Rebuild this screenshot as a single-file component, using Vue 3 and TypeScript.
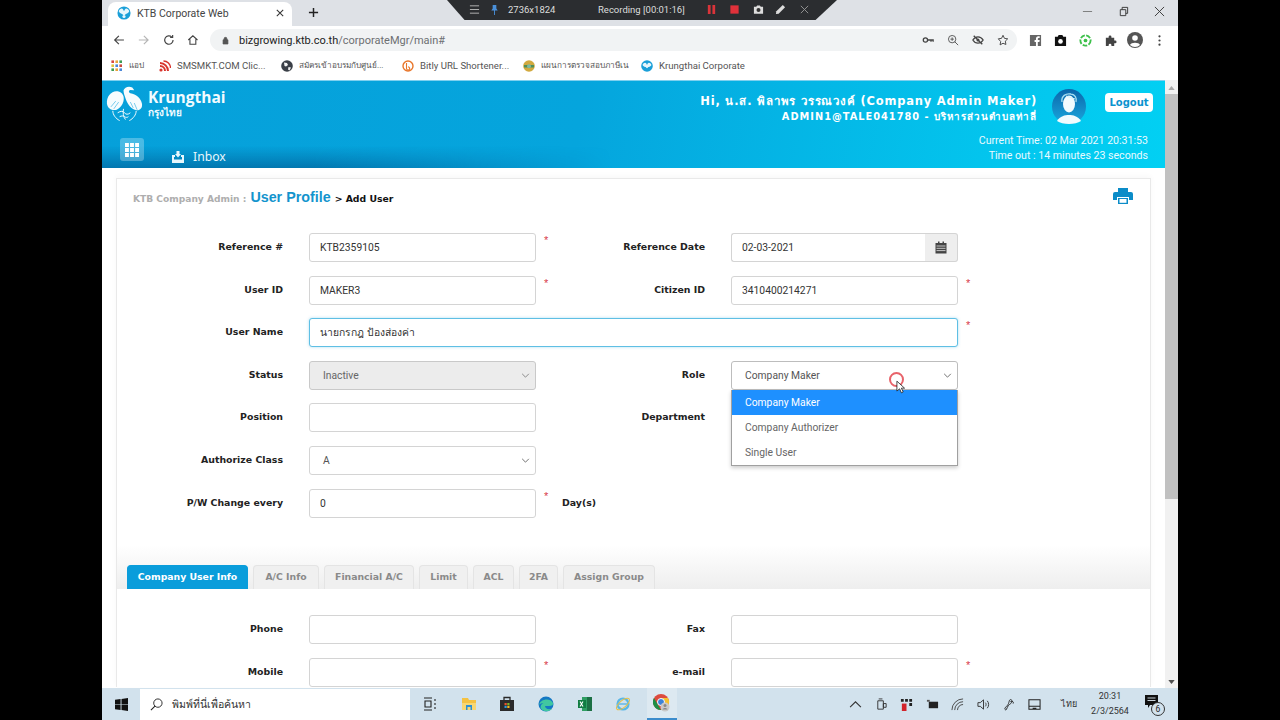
<template>
  <div class="screen">
    <div class="pillar"></div>
    <div class="window">
      <!-- browser tab strip -->
      <div class="tabstrip">
        <div class="browser-tab">
          <svg class="favicon" viewBox="0 0 16 16"><circle cx="8" cy="8" r="7.500" fill="#1a9fd8" /><path d="M2 6c1-3 4-4 5-2l1 2 1-2c1-2 4-1 5 2-1 2-3 3-4 3-1 2-3 2-4 0-1 0-3-1-4-3z" fill="#e6f6fc" /><circle cx="8" cy="12" r="1.800" fill="#e6f6fc" /></svg>
          <span class="browser-tab-title">KTB Corporate Web</span>
          <svg class="tab-close" viewBox="0 0 10 10"><path d="M1 1l8 8M9 1l-8 8" stroke="#333" stroke-width="1.300" /></svg>
        </div>
        <svg class="new-tab" viewBox="0 0 12 12"><path d="M6 1v10M1 6h10" stroke="#222" stroke-width="1.600" /></svg>
        <div class="winctl">
          <svg viewBox="0 0 12 12"><path d="M1 6h10" stroke="#777" stroke-width="1" /></svg>
          <svg viewBox="0 0 12 12"><path d="M2.500 4h6v6.500h-6zM4.500 4V1.500h6v6.500H8.500" fill="none" stroke="#333" stroke-width="1" /></svg>
          <svg viewBox="0 0 12 12"><path d="M1 1l10 10M11 1L1 11" stroke="#333" stroke-width="1" /></svg>
        </div>
        <!-- screen recorder bar lying over the window -->
        <div class="recorder">
          <svg class="rec-ic" style="left: 22px" viewBox="0 0 12 12"><path d="M1 2h10M1 6h10M1 10h10" stroke="#bbb" stroke-width="1" /></svg>
          <svg class="rec-ic" style="left: 42px" viewBox="0 0 12 12"><path d="M4 1h4v4l1.500 2h-7L4 5zM5.500 7h1v5h-1z" fill="#4a90d9" /></svg>
          <span class="rec-size">2736x1824</span>
          <span class="rec-time">Recording [00:01:16]</span>
          <svg class="rec-ic" style="left: 259px" viewBox="0 0 12 12"><path d="M2 1h3v10H2zM7 1h3v10H7z" fill="#d9343a" /></svg>
          <svg class="rec-ic" style="left: 282px" viewBox="0 0 12 12"><path d="M1.500 1.500h9v9h-9z" fill="#e0313a" /></svg>
          <svg class="rec-ic" style="left: 306px" viewBox="0 0 12 12"><path d="M1 3h2.500l1-1.500h3L8.500 3H11v7.500H1z" fill="#ddd" /><circle cx="6" cy="6.500" r="2.200" fill="#333" /></svg>
          <svg class="rec-ic" style="left: 328px" viewBox="0 0 12 12"><path d="M8.500 1L11 3.500 4 10.500 1 11l.5-3z" fill="#ddd" /></svg>
          <svg class="rec-ic" style="left: 352px" viewBox="0 0 12 12"><path d="M2 2l8 8M10 2l-8 8" stroke="#999" stroke-width="1" /></svg>
        </div>
      </div>

      <!-- address bar -->
      <div class="toolbar">
        <div class="nav-icons">
          <svg viewBox="0 0 14 14"><path d="M13 7H2M7 2L2 7l5 5" fill="none" stroke="#444" stroke-width="1.400" /></svg>
          <svg viewBox="0 0 14 14"><path d="M1 7h11M7 2l5 5-5 5" fill="none" stroke="#b5b5b5" stroke-width="1.400" /></svg>
          <svg viewBox="0 0 14 14"><path d="M12 7a5 5 0 1 1-1.500-3.500M11.500 1v3h-3" fill="none" stroke="#444" stroke-width="1.400" /></svg>
          <svg viewBox="0 0 14 14"><path d="M1.500 7L7 2l5.500 5M3.500 6v6h7V6" fill="none" stroke="#444" stroke-width="1.300" /></svg>
        </div>
        <div class="omnibox">
          <svg class="lock" viewBox="0 0 10 12"><path d="M1.500 5h7v6h-7zM3 5V3.500a2 2 0 0 1 4 0V5" fill="#555" stroke="#555" stroke-width="1" /></svg>
          <span class="url"><b>bizgrowing.ktb.co.th</b>/corporateMgr/main#</span>
          <div class="omni-icons">
            <svg viewBox="0 0 14 14"><circle cx="4" cy="7" r="2.500" fill="none" stroke="#444" stroke-width="1.500" /><path d="M6.500 7H13v2M10.500 7v2" fill="none" stroke="#444" stroke-width="1.500" /></svg>
            <svg viewBox="0 0 14 14"><circle cx="6" cy="6" r="4.300" fill="none" stroke="#555" stroke-width="1.100" /><path d="M9 9l4 4M4 6h4M6 4v4" stroke="#555" stroke-width="1.100" /></svg>
            <svg viewBox="0 0 14 14"><path d="M1 7c3-5 9-5 12 0-3 5-9 5-12 0z" fill="none" stroke="#444" stroke-width="1.500" /><circle cx="7" cy="7" r="1.800" fill="#444" /><path d="M2 2l10 10" stroke="#444" stroke-width="1.500" /></svg>
            <svg viewBox="0 0 14 14"><path d="M7 1.500l1.700 3.600 3.800.5-2.800 2.700.7 3.900L7 10.800l-3.400 1.900.7-3.900L1.500 5.600l3.800-.5z" fill="none" stroke="#444" stroke-width="1.100" /></svg>
          </div>
        </div>
        <div class="ext-icons">
          <svg viewBox="0 0 14 14"><path d="M1 1h12v12H9.500V8.500h1.700l.3-2h-2V5.200c0-.6.300-1 1-1h1V2.400h-1.500C8.500 2.400 7.500 3.500 7.500 5v1.500H6v2h1.500V13H1z" fill="#666" /></svg>
          <svg viewBox="0 0 14 14"><path d="M1 3h3l1-2h4l1 2h3v10H1z" fill="#111" /><circle cx="7" cy="8" r="2.500" fill="#fff" /></svg>
          <svg viewBox="0 0 14 14"><circle cx="7" cy="7" r="5.500" fill="none" stroke="#3cc04a" stroke-width="2" stroke-dasharray="5 1.500" /><circle cx="7" cy="7" r="2" fill="#3cc04a" /></svg>
          <svg viewBox="0 0 14 14"><path d="M2 4h3V3a1.500 1.500 0 0 1 3 0v1h3v3h1a1.500 1.500 0 0 1 0 3h-1v3H8v-1a1.500 1.500 0 0 0-3 0v1H2z" fill="#444" /></svg>
          <svg class="ext-avatar" viewBox="0 0 16 16"><circle cx="8" cy="8" r="8" fill="#555" /><circle cx="8" cy="6" r="2.800" fill="#fff" /><path d="M3 13c1-3 9-3 10 0a7 7 0 0 1-10 0z" fill="#fff" /></svg>
          <svg class="ext-dots" viewBox="0 0 14 14"><circle cx="7" cy="2.500" r="1.200" fill="#444" /><circle cx="7" cy="7" r="1.200" fill="#444" /><circle cx="7" cy="11.500" r="1.200" fill="#444" /></svg>
        </div>
      </div>

      <!-- bookmarks -->
      <div class="bookmarks">
        <div v-for="b in bookmarks" :key="b.label" class="bookmark" :style="{ width: b.width + 'px' }">
          <svg class="bm-icon" viewBox="0 0 12 12">
            <template v-if="b.icon === 'apps'">
              <rect v-for="c in appDots" :key="c.x + '-' + c.y" :x="c.x" :y="c.y" width="2.600" height="2.600" :fill="c.fill" />
            </template>
            <template v-else-if="b.icon === 'rss'">
              <path d="M1 3a8 8 0 0 1 8 8M1 6a5 5 0 0 1 5 5" fill="none" stroke="#d8342c" stroke-width="2" />
              <path d="M4.500 1a7 7 0 0 1 7 7" fill="none" stroke="#d8342c" stroke-width="1.400" />
              <circle cx="2" cy="10" r="1.600" fill="#d8342c" />
            </template>
            <template v-else-if="b.icon === 'globe'">
              <circle cx="6" cy="6" r="5.800" fill="#3a3f47" />
              <path d="M3 2.500l3 .5 1 2-2 1.500-1.500-.5zM7.500 7l2.500.5-1.500 3-1.500-1z" fill="#f4f4f4" />
            </template>
            <template v-else-if="b.icon === 'bitly'">
              <circle cx="6" cy="6" r="5" fill="#fff" stroke="#e8762b" stroke-width="1.400" />
              <path d="M4.500 3v5.500a1.600 1.600 0 1 0 1.600-1.600" fill="none" stroke="#e8762b" stroke-width="1.100" />
            </template>
            <template v-else-if="b.icon === 'seal'">
              <circle cx="6" cy="6" r="5.800" fill="#d2a93e" />
              <path d="M1 5h10v2.500H1z" fill="#4f8f58" />
              <circle cx="6" cy="6.300" r="2" fill="#7fb9a0" />
            </template>
            <template v-else>
              <circle cx="6" cy="6" r="5.800" fill="#1a9fd8" />
              <path d="M1.500 5c1-2.500 3-3 3.800-1.500L6 5l.7-1.500C7.500 2 9.500 2.500 10.500 5c-1 1.500-2.300 2-3.200 2-.7 1.500-1.900 1.500-2.600 0-.9 0-2.200-.5-3.200-2z" fill="#e6f6fc" />
            </template>
          </svg>
          <span :class="{ 'bm-thai': b.thai }">{{ b.label }}</span>
        </div>
      </div>

      <div class="page">
        <div class="viewport">
          <header class="site-header">
            <div class="header-glow"></div>
            <div class="header-left">
              <div class="brand">
                <svg class="garuda" viewBox="0 0 38 38">
                  <path d="M1 19C0 11 6 5 12 6c5 1 7 5 6 10-1 4-3 7-7 9-5 1-9-1-10-6z" fill="#f6fcfe" />
                  <path d="M18 5c1-3 5-5 9-3l2 3-4-.5c-2 .5-2 2.500 0 3.500 6 1 11 5 12 11 .5 5-3 7.500-7.500 6-4.500-2-8-7-9.500-12-1-3-2-5-2-8z" fill="#f6fcfe" />
                  <path d="M5 22l5-6M8 24l5-7M28 23l-3-6M32 25l-3-7" stroke="#3eb6e4" stroke-width=".7" />
                  <path d="M7 26c0 4 3 8 7 10M31 26c0 4-3 8-7 10M12 28c3-2 6-2 7 0 1 2 4 2 6 0M14 32c2-1 4-1 5 0 1 1 3 1 4 0M18 24c-1 3 0 9 2 11" fill="none" stroke="#f6fcfe" stroke-width="1" />
                </svg>
                <div class="brand-text">
                  <div class="brand-name">Krungthai</div>
                  <div class="brand-thai">กรุงไทย</div>
                </div>
              </div>
              <div class="main-nav">
                <div class="grid-btn">
                  <svg viewBox="0 0 13 13"><path d="M0 0h3.600v3.600H0zM4.700 0h3.600v3.600H4.700zM9.400 0H13v3.600H9.400zM0 4.700h3.600v3.600H0zM4.700 4.700h3.600v3.600H4.700zM9.400 4.700H13v3.600H9.400zM0 9.400h3.600V13H0zM4.700 9.400h3.600V13H4.700zM9.400 9.400H13V13H9.400z" fill="#fff" /></svg>
                </div>
                <div class="inbox">
                  <svg viewBox="0 0 14 14"><path d="M1 5h3v2H3v2.500h8V7h-1V5h3v8H1z" fill="#e8f7fc" /><path d="M5.500 1h3v3H10L7 7.500 4 4h1.500z" fill="#e8f7fc" /></svg>
                  <span>Inbox</span>
                </div>
              </div>
            </div>
            <div class="header-right">
              <div class="user-row">
                <div class="user-lines">
                  <div class="user-name">Hi, น.ส. พิลาพร วรรณวงค์ (Company Admin Maker)</div>
                  <div class="user-org">ADMIN1@TALE041780 - บริหารส่วนตำบลท่าลี่</div>
                </div>
                <svg class="avatar" viewBox="0 0 34 35">
                  <defs>
                    <linearGradient id="avatarFill" x1="0" y1="0" x2="0" y2="1">
                      <stop offset="0" stop-color="#0b66aa" />
                      <stop offset="1" stop-color="#1aa8de" />
                    </linearGradient>
                  </defs>
                  <ellipse cx="17" cy="17.500" rx="17" ry="17.500" fill="url(#avatarFill)" />
                  <ellipse cx="17" cy="15" rx="6" ry="8.500" fill="#f2fbfe" />
                  <path d="M5 32c3-5 8-6 12-6s9 1 12 6c-3 2-7 3-12 3S8 34 5 32z" fill="#f2fbfe" />
                  <path d="M10 13c-1-6 4-9 9-8 4 .5 6 4 5 8" fill="none" stroke="#a9def2" stroke-width="1.300" />
                  <path d="M14 7l9 3" stroke="#d6f1fa" stroke-width="1" />
                </svg>
                <button class="logout">Logout</button>
              </div>
              <div class="times">
                <div>Current Time: 02 Mar 2021 20:31:53</div>
                <div>Time out : 14 minutes 23 seconds</div>
              </div>
            </div>
          </header>

          <main class="card">
            <div class="title-row">
              <div>
                <span class="crumb">KTB Company Admin :</span>
                <span class="title">User Profile</span>
                <span class="sub">&gt; Add User</span>
              </div>
              <svg class="printer" viewBox="0 0 20 16"><path d="M5 0h10v4H5z" fill="#0b8cc8" /><path d="M2 4h16a2 2 0 0 1 2 2v6h-4V9H4v3H0V6a2 2 0 0 1 2-2z" fill="#0b8cc8" /><path d="M5 10h10v6H5z" fill="#0b8cc8" /><path d="M6.500 11h7v3.800h-7z" fill="#fff" /></svg>
            </div>

            <div class="form-grid">
              <label class="lbl">Reference #</label>
              <input class="ctl" value="KTB2359105" readonly />
              <span class="req">*</span>
              <label class="lbl">Reference Date</label>
              <div class="date-group">
                <input class="ctl date-input" value="02-03-2021" readonly />
                <span class="date-btn">
                  <svg viewBox="0 0 12 13"><path d="M.5 2H3V.5h1.500V2h3V.5H9V2h2.500v10.500H.5z" fill="#444" /><path d="M1.500 5h9M1.500 7.300h9M1.500 9.600h9" stroke="#e8e8e8" stroke-width=".8" /></svg>
                </span>
              </div>
              <span></span>

              <label class="lbl">User ID</label>
              <input class="ctl" value="MAKER3" readonly />
              <span class="req">*</span>
              <label class="lbl">Citizen ID</label>
              <input class="ctl" value="3410400214271" readonly />
              <span class="req">*</span>

              <label class="lbl">User Name</label>
              <input class="ctl ctl-focus" value="นายกรกฎ ป้องส่องค่า" readonly />
              <span class="req">*</span>

              <label class="lbl">Status</label>
              <div class="ctl sel sel-off">Inactive<svg class="chev" viewBox="0 0 10 6"><path d="M1 1l4 4 4-4" fill="none" stroke="#777" stroke-width="1" /></svg></div>
              <span></span>
              <label class="lbl">Role</label>
              <div class="role-wrap">
                <div class="ctl sel sel-open">Company Maker<svg class="chev" viewBox="0 0 10 6"><path d="M1 1l4 4 4-4" fill="none" stroke="#555" stroke-width="1" /></svg></div>
                <ul class="dropdown">
                  <li v-for="(r, i) in roles" :key="r" :class="{ active: i === 0 }">{{ r }}</li>
                </ul>
                <span class="click-ring"></span>
                <svg class="pointer" viewBox="0 0 10 15"><path d="M1 1v11l3-2.500 2 4.500 2-1-2-4.200h3.500z" fill="#fff" stroke="#222" stroke-width=".9" /></svg>
              </div>
              <span></span>

              <label class="lbl">Position</label>
              <input class="ctl" readonly />
              <span></span>
              <label class="lbl">Department</label>
              <span></span>
              <span></span>

              <label class="lbl">Authorize Class</label>
              <div class="ctl sel">A<svg class="chev" viewBox="0 0 10 6"><path d="M1 1l4 4 4-4" fill="none" stroke="#555" stroke-width="1" /></svg></div>
              <span></span>
              <span></span>
              <span></span>
              <span></span>

              <label class="lbl">P/W Change every</label>
              <input class="ctl" value="0" readonly />
              <span class="req">*</span>
              <label class="lbl lbl-left">Day(s)</label>
            </div>

            <div class="tab-band">
              <div
                v-for="(t, i) in tabs"
                :key="t.label"
                class="tab"
                :class="{ current: i === 0 }"
                :style="{ width: t.width + 'px' }"
              >
                {{ t.label }}
              </div>
            </div>

            <div class="form-grid lower">
              <label class="lbl">Phone</label>
              <input class="ctl" readonly />
              <span></span>
              <label class="lbl">Fax</label>
              <input class="ctl" readonly />
              <span></span>

              <label class="lbl">Mobile</label>
              <input class="ctl" readonly />
              <span class="req">*</span>
              <label class="lbl">e-mail</label>
              <input class="ctl" readonly />
              <span class="req">*</span>
            </div>
          </main>
        </div>

        <div class="scrollbar">
          <svg class="sb-arrow" viewBox="0 0 8 5"><path d="M4 0l4 5H0z" fill="#a8a8a8" /></svg>
          <div class="sb-thumb"></div>
          <svg class="sb-arrow sb-down" viewBox="0 0 8 5"><path d="M0 0h8L4 5z" fill="#505050" /></svg>
        </div>
      </div>

      <!-- windows taskbar -->
      <footer class="taskbar">
        <svg class="start" viewBox="0 0 14 14"><path d="M0 2l6-.9V6.600H0zM7 1l7-1v6.600H7zM0 7.400h6v5.500L0 12zM7 7.400h7V14l-7-1z" fill="#111" /></svg>
        <div class="search">
          <svg viewBox="0 0 14 14"><circle cx="8.500" cy="5.500" r="4.500" fill="none" stroke="#222" stroke-width="1" /><path d="M5.300 8.700L1 13" stroke="#222" stroke-width="1.100" /></svg>
          <span>พิมพ์ที่นี่เพื่อค้นหา</span>
        </div>
        <div class="apps">
          <svg viewBox="0 0 16 16"><path d="M2 2h8M2 14h8M3 5h6v6H3zM13 3v2M13 7v2M13 11v2" fill="none" stroke="#222" stroke-width="1.100" /></svg>
          <svg viewBox="0 0 16 16"><path d="M1 2h6l1 2h7v10H1z" fill="#f5c242" /><path d="M1 7h14v7H1z" fill="#f7d774" /><path d="M5 9h6v5H9.500v-3h-3v3H5z" fill="#2a8fd6" /></svg>
          <svg viewBox="0 0 16 16"><path d="M1 4h14v11H1z" fill="#2b2b2b" /><path d="M5 4V1.500h6V4" fill="none" stroke="#2b2b2b" stroke-width="1.300" /><path d="M5.500 7h2.200v2.200H5.500z" fill="#e8512d" /><path d="M8.300 7h2.200v2.200H8.300z" fill="#7db928" /><path d="M5.500 9.800h2.200V12H5.500z" fill="#2a9bdc" /><path d="M8.300 9.800h2.200V12H8.300z" fill="#f6b81c" /></svg>
          <svg viewBox="0 0 16 16"><circle cx="8" cy="8" r="7.500" fill="#1478c4" /><path d="M1 9c1-6 11-8 14-2 .5 2-1 3-4 3H7c0 3 4 4 7 2.500C12 16 5 16 3 12.500 2 11 3 8 5.500 7 3 7 1.500 8 1 9z" fill="#41c8a0" /></svg>
          <svg viewBox="0 0 16 16"><path d="M5 1h10v14H5z" fill="#2f9e63" /><path d="M10 1h5v14h-5z" fill="#1c7044" /><path d="M1 4h8v8H1z" fill="#107c41" /><path d="M3 5.500l3 5M6 5.500l-3 5" stroke="#fff" stroke-width="1.100" /></svg>
          <svg viewBox="0 0 16 16"><circle cx="8" cy="8" r="5.500" fill="none" stroke="#58b7e8" stroke-width="2.200" /><path d="M3 8h10" stroke="#58b7e8" stroke-width="1.400" /><ellipse cx="8" cy="8" rx="8" ry="3.500" transform="rotate(-40 8 8)" fill="none" stroke="#e5c04a" stroke-width="1" /></svg>
          <div class="chrome-app">
            <svg viewBox="0 0 18 18"><circle cx="8" cy="8" r="8" fill="#dd4b3e" /><path d="M1 4l4 7 3 5a8 8 0 0 1-7-12z" fill="#1e8f45" /><path d="M8 16a8 8 0 0 0 7-12H8l4 4z" fill="#f6c12f" /><circle cx="8" cy="8" r="3.500" fill="#3b82d8" stroke="#fff" stroke-width="1" /><circle cx="12" cy="13" r="4.500" fill="#c9c9c9" /><circle cx="12" cy="11.500" r="1.500" fill="#888" /><path d="M9.500 15.500c.5-2 4.500-2 5 0" fill="#888" /></svg>
          </div>
        </div>
        <div class="tray">
          <svg viewBox="0 0 12 12"><path d="M1 8.500L6 3.500l5 5" fill="none" stroke="#333" stroke-width="1" /></svg>
          <svg viewBox="0 0 12 14"><path d="M2 3h6v9H2zM8 6h3v4H8zM3 1h4" fill="none" stroke="#333" stroke-width="1" /></svg>
          <svg viewBox="0 0 14 14"><path d="M2 6h5v8H2z" fill="#d2232a" /><path d="M1 1h3v3H1zM5.500 1h3v3h-3zM10 1h3v3h-3zM10 5.500h3v3h-3z" fill="#222" /></svg>
          <svg viewBox="0 0 14 12"><path d="M3 3h10v7H3z" fill="#222" /><path d="M1 1h3v2H1z" fill="#555" /></svg>
          <svg viewBox="0 0 14 14"><path d="M1 13a12 12 0 0 1 12-12M4 13a9 9 0 0 1 9-9M7 13a6 6 0 0 1 6-6" fill="none" stroke="#444" stroke-width="1" /></svg>
          <svg viewBox="0 0 14 14"><path d="M1 5h2.500L7 2v10L3.500 9H1zM9 5c1 1 1 3 0 4M11 3c2 2 2 6 0 8" fill="none" stroke="#333" stroke-width="1" /></svg>
          <svg viewBox="0 0 14 14"><path d="M4 13c-3-2 2-4 3-7s1-5 3-4 0 4-2 5-3 6-4 6zM9 4c2-1 4 0 3 2" fill="none" stroke="#222" stroke-width="1" /></svg>
          <svg viewBox="0 0 14 14"><path d="M1 2h12v10H1zM1 9h12M5 11h4" fill="none" stroke="#222" stroke-width="1.100" /></svg>
          <span class="lang">ไทย</span>
          <div class="clock"><div>20:31</div><div>2/3/2564</div></div>
          <div class="notify">
            <svg viewBox="0 0 14 14"><path d="M0 0h13v10H5l-2 3v-3H0z" fill="#111" /><path d="M2.500 3h8M2.500 5.500h8" stroke="#dbe7ef" stroke-width=".9" /></svg>
            <span class="notify-count">6</span>
          </div>
        </div>
      </footer>
    </div>
    <div class="pillar"></div>
  </div>
</template>

<script setup lang="ts">
interface Bookmark {
  label: string
  icon: string
  width: number
  thai?: boolean
}

const bookmarks: Bookmark[] = [
  { label: 'แอป', icon: 'apps', width: 48, thai: true },
  { label: 'SMSMKT.COM Clic...', icon: 'rss', width: 122 },
  { label: 'สมัครเข้าอบรมกับศูนย์...', icon: 'globe', width: 121, thai: true },
  { label: 'Bitly URL Shortener...', icon: 'bitly', width: 121 },
  { label: 'แผนการตรวจสอบภาษีเน', icon: 'seal', width: 118, thai: true },
  { label: 'Krungthai Corporate', icon: 'ktb', width: 120 },
]

// coloured squares of the Chrome apps shortcut
const dotColors = ['#d8483e', '#e8a33a', '#3d9c52', '#e2c23c', '#4a86d8', '#c94a3c', '#3d9c52', '#e8a33a', '#4a86d8']
const appDots = dotColors.map((fill, i) => ({
  fill,
  x: 0.4 + (i % 3) * 4,
  y: 0.4 + Math.floor(i / 3) * 4,
}))

const roles = ['Company Maker', 'Company Authorizer', 'Single User']

const tabs = [
  { label: 'Company User Info', width: 121 },
  { label: 'A/C Info', width: 66 },
  { label: 'Financial A/C', width: 90 },
  { label: 'Limit', width: 49 },
  { label: 'ACL', width: 41 },
  { label: '2FA', width: 39 },
  { label: 'Assign Group', width: 92 },
]
</script>

<style>
html,
body {
  margin: 0;
  background: #000;
  overflow: hidden;
}
</style>

<style scoped>
.screen {
  display: flex;
  width: 1280px;
  height: 720px;
  font-family: Roboto, "Noto Sans", sans-serif;
  background: #000;
}
.pillar {
  width: 102px;
  flex: none;
  background: #000;
}
.window {
  width: 1076px;
  flex: none;
  display: flex;
  flex-direction: column;
  overflow: hidden;
}

/* browser chrome */
.tabstrip {
  position: relative;
  height: 26px;
  flex: none;
  background: #dee1e6;
  display: flex;
  align-items: flex-end;
  padding-left: 6px;
}
.browser-tab {
  width: 184px;
  height: 24px;
  background: #fff;
  border-radius: 8px 8px 0 0;
  display: flex;
  align-items: center;
  padding: 0 8px 2px 9px;
  box-sizing: border-box;
}
.favicon {
  width: 14px;
  height: 14px;
  margin-right: 6px;
}
.browser-tab-title {
  flex: 1;
  font-size: 10.500px;
  color: #444;
}
.tab-close {
  width: 8px;
  height: 8px;
}
.new-tab {
  width: 11px;
  height: 11px;
  margin: 0 0 8px 16px;
}
.winctl {
  margin-left: auto;
  margin-right: 13px;
  align-self: flex-start;
  margin-top: 6px;
  display: flex;
  gap: 25px;
}
.winctl svg {
  width: 11px;
  height: 11px;
}
.recorder {
  position: absolute;
  left: 345px;
  top: 0;
  width: 390px;
  height: 20px;
  background: #2b2d30;
  clip-path: polygon(0 0, 100% 0, 94.500% 100%, 4.500% 100%);
  color: #ddd;
  font-size: 9.500px;
}
.rec-ic {
  position: absolute;
  top: 4px;
  width: 11px;
  height: 11px;
}
.rec-size {
  position: absolute;
  left: 61px;
  top: 4px;
}
.rec-time {
  position: absolute;
  left: 151px;
  top: 4px;
}
.toolbar {
  height: 26px;
  flex: none;
  background: #fff;
  display: flex;
  align-items: center;
}
.nav-icons {
  display: flex;
  gap: 13px;
  padding-left: 11px;
  width: 97px;
  box-sizing: border-box;
  flex: none;
  margin-top: 2px;
}
.nav-icons svg {
  width: 12px;
  height: 12px;
}
.omnibox {
  width: 807px;
  flex: none;
  margin-left: 11px;
  height: 22px;
  margin-top: 2px;
  border-radius: 11px;
  background: #f1f3f4;
  display: flex;
  align-items: center;
  padding: 0 8px 0 12px;
  box-sizing: border-box;
}
.lock {
  width: 7px;
  height: 9px;
}
.url {
  margin-left: 10px;
  font-size: 11px;
  color: #6d6f72;
}
.url b {
  font-weight: 400;
  color: #222;
}
.omni-icons {
  margin-left: auto;
  display: flex;
  gap: 13px;
}
.omni-icons svg {
  width: 12px;
  height: 12px;
}
.ext-icons {
  margin-left: 12px;
  margin-top: 2px;
  display: flex;
  align-items: center;
  gap: 12px;
}
.ext-icons svg {
  width: 13px;
  height: 13px;
}
.ext-icons .ext-avatar {
  width: 16px;
  height: 16px;
  margin: 0 -1px 0 -2px;
}
.ext-icons .ext-dots {
  margin-left: -1px;
}
.bookmarks {
  height: 28px;
  flex: none;
  background: #fff;
  display: flex;
  align-items: center;
  padding-left: 9px;
  padding-bottom: 1px;
  font-size: 9.600px;
  color: #555;
  box-sizing: border-box;
}
.bookmark {
  display: flex;
  align-items: center;
  gap: 6px;
  flex: none;
  white-space: nowrap;
}
.bm-icon {
  width: 12px;
  height: 12px;
  flex: none;
}
.bm-thai {
  font-size: 8.200px;
}

/* page */
.page {
  flex: 1;
  display: flex;
  min-height: 0;
  background: #fff;
}
.viewport {
  flex: 1;
  min-width: 0;
  overflow: hidden;
}
.scrollbar {
  width: 13px;
  flex: none;
  background: #f1f1f1;
  display: flex;
  flex-direction: column;
  align-items: center;
}
.sb-arrow {
  width: 7px;
  height: 4px;
  flex: none;
  margin-top: 6px;
}
.sb-thumb {
  width: 100%;
  height: 405px;
  margin-top: 4px;
  background: #c1c1c1;
}
.sb-down {
  margin-top: auto;
  margin-bottom: 4px;
}
.site-header {
  position: relative;
  height: 88px;
  display: flex;
  justify-content: space-between;
  border-top: 1px solid #7fd0ef;
  box-sizing: border-box;
  background: linear-gradient(100deg, #06a0da 0%, #05a5dd 45%, #03c6ee 85%, #02d0f3 100%);
}
.header-glow {
  position: absolute;
  left: 0;
  right: 0;
  bottom: 0;
  height: 22px;
  background: linear-gradient(to top, rgba(0, 84, 140, 0.55), rgba(0, 120, 180, 0));
  -webkit-mask-image: linear-gradient(to right, #000 20%, transparent 48%);
  mask-image: linear-gradient(to right, #000 20%, transparent 48%);
}
.header-left {
  position: relative;
  padding: 4px 0 0 4px;
}
.brand {
  display: flex;
  gap: 5px;
}
.garuda {
  width: 37px;
  height: 38px;
}
.brand-text {
  color: #f2fbff;
  padding-top: 3px;
}
.brand-name {
  font-family: "Open Sans", sans-serif;
  font-size: 15.500px;
  font-weight: 700;
  line-height: 19px;
}
.brand-thai {
  font-size: 10px;
  font-weight: 600;
  line-height: 11px;
}
.main-nav {
  display: flex;
  margin: 15px 0 0 14px;
}
.grid-btn {
  width: 24px;
  height: 23px;
  border-radius: 3px;
  background: rgba(255, 255, 255, 0.28);
  display: flex;
  align-items: center;
  justify-content: center;
}
.grid-btn svg {
  width: 14px;
  height: 14px;
}
.inbox {
  margin: 10px 0 0 27px;
  display: flex;
  align-items: center;
  gap: 8px;
  color: #e8f7fc;
  font-family: "Noto Sans", sans-serif;
  font-size: 12.200px;
}
.inbox svg {
  width: 14px;
  height: 14px;
}
.header-right {
  position: relative;
  padding: 8px 12px 0 0;
  display: flex;
  flex-direction: column;
  align-items: flex-end;
}
.user-row {
  display: flex;
  align-items: flex-start;
}
.user-lines {
  text-align: right;
  color: #fff;
  font-family: "DejaVu Sans", sans-serif;
  font-weight: 700;
  padding-top: 4px;
}
.user-name {
  font-size: 11.500px;
  letter-spacing: 0.8px;
  line-height: 16px;
}
.user-org {
  font-size: 9.800px;
  letter-spacing: 1px;
  line-height: 15px;
}
.avatar {
  width: 34px;
  height: 35px;
  margin-left: 15px;
}
.logout {
  width: 48px;
  height: 19px;
  margin: 4px 0 0 19px;
  padding: 0;
  border: none;
  border-radius: 4px;
  background: #fff;
  color: #0a93cf;
  font-family: "DejaVu Sans", sans-serif;
  font-size: 10px;
  font-weight: 700;
}
.times {
  margin: 9px 5px 0 0;
  text-align: right;
  color: #eafaff;
  font-size: 10.600px;
  line-height: 15px;
}

/* card */
.card {
  margin: 10px 14px 0;
  border: 1px solid #e9e9e9;
  border-bottom: none;
  box-shadow: 0 -2px 6px rgba(0, 0, 0, 0.03);
}
.title-row {
  display: flex;
  justify-content: space-between;
  align-items: center;
  height: 20px;
  padding: 7px 17px 0 16px;
  margin-bottom: 27px;
  font-family: "DejaVu Sans", sans-serif;
  font-weight: 700;
}
.crumb {
  font-size: 9.100px;
  color: #aeaeae;
}
.title {
  margin: 0 4px;
  font-family: "Liberation Sans", sans-serif;
  font-size: 14.300px;
  color: #1394cd;
}
.sub {
  font-size: 9.300px;
  color: #111;
}
.printer {
  width: 20px;
  height: 16px;
}
.form-grid {
  display: grid;
  grid-template-columns: 192px 227px 24px 171px 227px 24px;
  grid-auto-rows: 29px;
  row-gap: 13.600px;
}
.lbl {
  align-self: start;
  margin-top: 7px;
  padding-right: 26px;
  text-align: right;
  white-space: nowrap;
  font-family: "DejaVu Sans", sans-serif;
  font-size: 9.400px;
  font-weight: 700;
  line-height: 14px;
  color: #222;
}
.lbl-left {
  text-align: left;
  padding: 0 0 0 2px;
}
.ctl {
  box-sizing: border-box;
  width: 100%;
  height: 29px;
  margin: 0;
  padding: 0 10px;
  border: 1px solid #d4d4d4;
  border-radius: 3px;
  background: #fff;
  color: #333;
  font-family: Roboto, "Noto Sans", sans-serif;
  font-size: 10.300px;
  outline: none;
}
.ctl-focus {
  grid-column: span 4;
  border-color: #5fbfe4;
  box-shadow: 0 0 3px rgba(90, 190, 230, 0.5);
}
.req {
  padding: 1px 0 0 8px;
  color: #d83a4a;
  font-family: "Liberation Sans", sans-serif;
  font-size: 11px;
  line-height: 12px;
}
.date-group {
  display: flex;
}
.date-input {
  flex: 1;
  min-width: 0;
  border-right: none;
  border-radius: 3px 0 0 3px;
}
.date-btn {
  width: 33px;
  flex: none;
  box-sizing: border-box;
  background: #eeeeee;
  border: 1px solid #d4d4d4;
  border-left: none;
  border-radius: 0 3px 3px 0;
  display: flex;
  align-items: center;
  justify-content: center;
}
.date-btn svg {
  width: 12px;
  height: 13px;
}
.sel {
  display: flex;
  align-items: center;
  justify-content: space-between;
  padding: 1px 5px 0 13px;
  color: #555;
}
.sel-off {
  background: #ececec;
  border-color: #c9c9c9;
  color: #666;
}
.sel-open {
  border-color: #bdbdbd;
}
.chev {
  width: 9px;
  height: 5px;
}
.role-wrap {
  position: relative;
}
.dropdown {
  position: absolute;
  left: 0;
  right: 0;
  top: 29px;
  z-index: 5;
  box-sizing: border-box;
  margin: 0;
  padding: 0;
  list-style: none;
  height: 76px;
  background: #fff;
  border: 1px solid #a0a0a0;
  border-top: none;
  box-shadow: 0 2px 4px rgba(0, 0, 0, 0.2);
  font-family: Roboto, "Noto Sans", sans-serif;
  font-size: 10.300px;
  color: #666;
}
.dropdown li {
  height: 25.300px;
  line-height: 26px;
  padding-left: 13px;
}
.dropdown li.active {
  background: #1e90ff;
  color: #fff;
}
.click-ring {
  position: absolute;
  z-index: 6;
  left: 158px;
  top: 11px;
  width: 11px;
  height: 11px;
  border: 2.500px solid #e8636a;
  border-radius: 50%;
  background: rgba(255, 255, 255, 0.7);
}
.pointer {
  position: absolute;
  z-index: 7;
  left: 165px;
  top: 19px;
  width: 9px;
  height: 14px;
}
.tab-band {
  display: flex;
  gap: 5px;
  align-items: flex-end;
  height: 44px;
  margin-top: 27.400px;
  padding-left: 10px;
  background: linear-gradient(to bottom, #ffffff, #eeeeee);
}
.tab {
  height: 24px;
  border-radius: 4px 4px 0 0;
  background: #f0f0f0;
  border: 1px solid #e4e4e4;
  border-bottom: none;
  box-sizing: border-box;
  color: #8a8a8a;
  font-family: "DejaVu Sans", sans-serif;
  font-size: 9.300px;
  font-weight: 700;
  line-height: 22px;
  text-align: center;
  white-space: nowrap;
}
.tab.current {
  background: #0a9ddb;
  border-color: #0a9ddb;
  color: #fff;
}
.lower {
  padding-top: 26px;
}

/* taskbar */
.taskbar {
  height: 32px;
  flex: none;
  background: #d2e2ed;
  display: flex;
  align-items: center;
  position: relative;
}
.start {
  width: 13px;
  height: 13px;
  margin-left: 13px;
  flex: none;
}
.search {
  width: 270px;
  height: 31px;
  margin: 1px 0 0 12px;
  flex: none;
  background: #fff;
  display: flex;
  align-items: center;
  gap: 9px;
  padding-left: 10px;
  box-sizing: border-box;
  font-size: 10.500px;
  color: #333;
}
.search svg {
  width: 13px;
  height: 13px;
}
.apps {
  display: flex;
  align-items: center;
  gap: 22.700px;
  margin-left: 12px;
}
.apps svg {
  width: 16px;
  height: 16px;
  display: block;
}
.chrome-app {
  width: 30px;
  height: 32px;
  margin-left: -7px;
  box-sizing: border-box;
  background: #dde9f1;
  border-bottom: 2px solid #3c8ccc;
  display: flex;
  align-items: center;
  justify-content: center;
}
.chrome-app svg {
  width: 18px;
  height: 18px;
}
.tray {
  margin-left: auto;
  display: flex;
  align-items: center;
  gap: 12.500px;
  padding-right: 17px;
}
.tray svg {
  width: 13px;
  height: 13px;
  display: block;
}
.lang {
  font-size: 9px;
  color: #333;
  margin-left: 8px;
}
.clock {
  width: 41px;
  text-align: center;
  color: #333;
  font-size: 9px;
  line-height: 15px;
  white-space: nowrap;
}
.notify {
  position: relative;
  margin-left: 2px;
  width: 16px;
  height: 18px;
}
.notify svg {
  width: 14px;
  height: 14px;
}
.notify-count {
  position: absolute;
  right: -4px;
  bottom: -3px;
  width: 12px;
  height: 12px;
  border: 1px solid #333;
  border-radius: 50%;
  background: #d2e2ed;
  font-size: 8.500px;
  line-height: 12px;
  text-align: center;
  color: #222;
}
</style>
